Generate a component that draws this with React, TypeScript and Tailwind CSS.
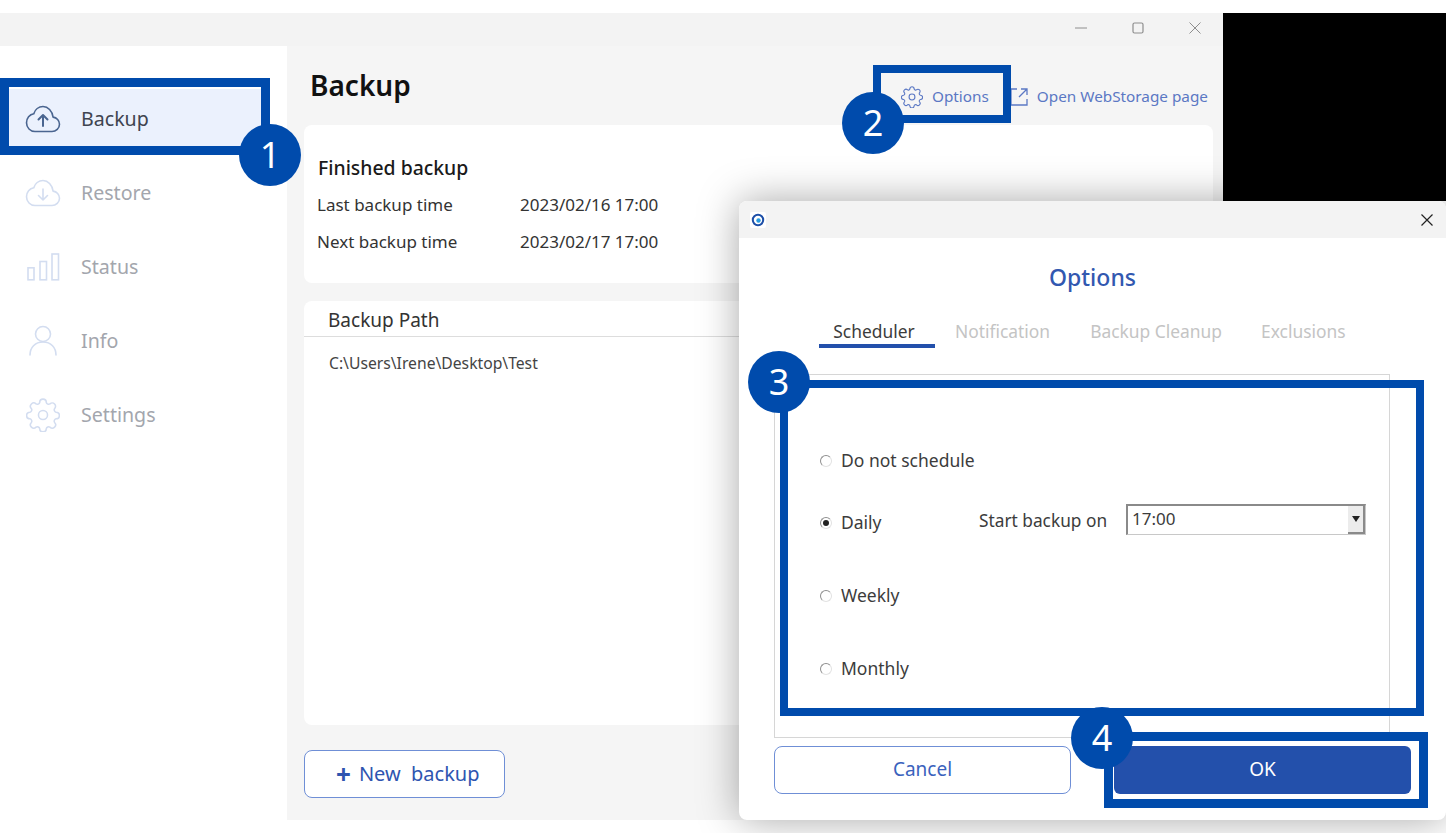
import type { ReactNode } from "react"

const font = { fontFamily: '"Noto Sans", sans-serif' }

function CloudUp({ color, down }: { color: string; down?: boolean }) {
  return (
    <svg width="36" height="28" viewBox="0 0 36 28" fill="none" stroke={color} strokeWidth="1.6" strokeLinecap="round" strokeLinejoin="round">
      <path d="M10 26.5h17c4 0 7.5-3.2 7.5-7.2 0-3.700-2.800-6.700-6.400-7.200C27.200 5.800 23 1.500 18 1.500c-4.300 0-8 3-9.200 7.200C4.600 9.300 1.500 13.200 1.500 17.700c0 4.900 3.800 8.800 8.500 8.800z" />
      {down ? <path d="M18 10v11M13.500 16.500 18 21l4.500-4.500" /> : <path d="M18 21V10M13.500 14.500 18 10l4.500 4.500" strokeWidth="2" />}
    </svg>
  )
}

function Bars({ color }: { color: string }) {
  return (
    <svg width="34" height="28" viewBox="0 0 34 28" fill="none" stroke={color} strokeWidth="1.6">
      <rect x="2" y="14.800" width="6" height="12" />
      <rect x="14" y="8.500" width="6.500" height="18.300" />
      <rect x="26" y="1" width="6.500" height="25.800" />
    </svg>
  )
}

function Person({ color }: { color: string }) {
  return (
    <svg width="30" height="32" viewBox="0 0 30 32" fill="none" stroke={color} strokeWidth="1.6" strokeLinecap="round">
      <circle cx="15" cy="9" r="7.500" />
      <path d="M2 30c0-7.500 5-13 13-13s13 5.500 13 13" />
    </svg>
  )
}

function Gear({ color, size, sw }: { color: string; size: number; sw: number }) {
  return (
    <svg width={size} height={size} viewBox="0 0 24 24" fill="none" stroke={color} strokeWidth={sw} strokeLinecap="round" strokeLinejoin="round">
      <path d="M9.670 4.140a2.300 2.300 0 0 1 4.660 0 1.700 1.700 0 0 0 2.550 1.050 2.300 2.300 0 0 1 3.300 3.300 1.700 1.700 0 0 0 1.050 2.550 2.300 2.300 0 0 1 0 4.660 1.700 1.700 0 0 0-1.050 2.550 2.300 2.300 0 0 1-3.300 3.300 1.700 1.700 0 0 0-2.550 1.050 2.300 2.300 0 0 1-4.660 0 1.700 1.700 0 0 0-2.550-1.050 2.300 2.300 0 0 1-3.300-3.300 1.700 1.700 0 0 0-1.050-2.550 2.300 2.300 0 0 1 0-4.660 1.700 1.700 0 0 0 1.050-2.550 2.300 2.300 0 0 1 3.300-3.300 1.700 1.700 0 0 0 2.550-1.050z" transform="translate(0 -1)" />
      <circle cx="12" cy="12" r="3.200" />
    </svg>
  )
}

function NavItem({ icon, label, active }: { icon: ReactNode; label: string; active?: boolean }) {
  return (
    <div className={`flex h-[59px] w-[252px] items-center ${active ? "bg-[#ebf1fd]" : ""}`}>
      <div className="flex w-[72px] justify-center pr-[4px]">{icon}</div>
      <span className={`text-[19.6px] leading-none ${active ? "text-[#3f4450]" : "text-[#a3a6ad]"}`}>{label}</span>
    </div>
  )
}

function Radio({ label, checked, labelClass }: { label: string; checked?: boolean; labelClass: string }) {
  return (
    <div className={`flex items-center ${labelClass}`}>
      <span className="flex h-[12px] w-[12px] items-center justify-center rounded-full border border-[#8f8f8f] border-b-[#e2e2e2] border-r-[#e2e2e2] bg-white">
        {checked && <span className="h-[6px] w-[6px] rounded-full bg-[#222222]" />}
      </span>
      <span className="ml-[9px] text-[17.5px] leading-none text-[#3c3c3c]">{label}</span>
    </div>
  )
}

function Marker({ n, className }: { n: number; className: string }) {
  return (
    <div className={`absolute flex h-[62px] w-[62px] items-center justify-center rounded-full bg-[#004bac] text-[36px] leading-none text-white ${className}`}>
      {n}
    </div>
  )
}

function Frame({ className }: { className: string }) {
  return <div className={`absolute border-[#004bac] ${className}`} />
}

export default function App() {
  return (
    <div className="relative h-[833px] w-[1446px] overflow-hidden bg-white" style={font}>
      <div className="flex h-[820px] pt-[13px]">
        {/* Main window */}
        <div className="flex h-[807px] w-[1223px] flex-col bg-[#f3f3f3]">
          <div className="flex h-[33px] items-center justify-end gap-[41px] pb-[4px] pr-[20px]">
            <svg width="16" height="16" viewBox="0 0 16 16" stroke="#8e8e8e" strokeWidth="1"><path d="M2 8h12" /></svg>
            <svg width="16" height="16" viewBox="0 0 16 16" fill="none" stroke="#8e8e8e" strokeWidth="1.200"><rect x="3" y="3" width="10" height="10" rx="1.500" /></svg>
            <svg width="16" height="16" viewBox="0 0 16 16" stroke="#8e8e8e" strokeWidth="1"><path d="M2.500 2.500l11 11M13.500 2.500l-11 11" /></svg>
          </div>
          <div className="flex flex-1">
            <aside className="flex w-[287px] flex-col gap-[15px] bg-white pl-[9px] pt-[43px]">
              <NavItem active label="Backup" icon={<CloudUp color="#4a6590" />} />
              <NavItem label="Restore" icon={<CloudUp down color="#d3ddf0" />} />
              <NavItem label="Status" icon={<Bars color="#d3ddf0" />} />
              <NavItem label="Info" icon={<Person color="#d3ddf0" />} />
              <NavItem label="Settings" icon={<Gear color="#d3ddf0" size={34} sw={1.1} />} />
            </aside>
            <main className="flex flex-1 flex-col bg-[#f5f5f5] pl-[17px] pr-[10px]">
              <div className="flex h-[79px] items-start justify-between">
                <h1 className="ml-[6px] mt-[19px] text-[28px] font-semibold leading-[40px] text-[#111111]">Backup</h1>
                <div className="mr-[5px] mt-[40px] flex items-center text-[15.3px] leading-none text-[#5b78c4]">
                  <Gear color="#5b78c4" size={22} sw={1.200} />
                  <span className="ml-[9px] mr-[20px]">Options</span>
                  <svg width="20" height="20" viewBox="0 0 20 20" fill="none" stroke="#5b78c4" strokeWidth="1.300" className="mr-[8px]">
                    <path d="M8 2H2v16h16v-6M12 2h6v6M18 2l-8 8" />
                  </svg>
                  <span>Open WebStorage page</span>
                </div>
              </div>
              <section className="h-[158px] rounded-[8px] bg-white pl-[13px] pt-[30px] text-[#333333]">
                <div className="ml-[1px] text-[19.4px] font-medium leading-[26px] text-[#1a1a1a]">Finished backup</div>
                <div className="mt-[10px] flex h-[26px] items-center text-[17px] leading-none">
                  <span className="w-[203px]">Last backup time</span>
                  <span>2023/02/16 17:00</span>
                </div>
                <div className="mt-[11px] flex h-[26px] items-center text-[17px] leading-none">
                  <span className="w-[203px]">Next backup time</span>
                  <span>2023/02/17 17:00</span>
                </div>
              </section>
              <section className="mt-[18px] h-[424px] rounded-[8px] bg-white">
                <div className="flex h-[36px] items-center border-b border-[#dddddd] pl-[24px] pt-[4px] text-[19px] leading-none text-[#333333]">Backup Path</div>
                <div className="pl-[25px] pt-[16px] text-[15.7px] leading-[20px] text-[#444444]">C:\Users\Irene\Desktop\Test</div>
              </section>
              <button className="mt-[25px] flex h-[48px] w-[201px] items-center rounded-[8px] border border-[#6f8fd6] bg-white pl-[31px] text-[20px] leading-none text-[#2f55b0]">
                <span className="mr-[8px] text-[26px] font-bold leading-none">+</span>New&nbsp; backup
              </button>
            </main>
          </div>
        </div>
        <div className="h-[188px] w-[223px] bg-black" />
      </div>

      {/* Options dialog */}
      <div className="absolute left-[739px] top-[201px] flex h-[619px] w-[707px] flex-col overflow-hidden rounded-[8px] bg-white shadow-[0_0_40px_rgba(0,0,0,0.35)]">
        <div className="flex h-[37px] items-center justify-between bg-[#f3f3f3] pl-[11px] pr-[11px]">
          <svg width="16" height="16" viewBox="0 0 16 16" fill="none">
            <rect width="16" height="16" rx="2" fill="#ffffff" />
            <circle cx="8" cy="8" r="5.200" stroke="#1d4fa8" strokeWidth="2" />
            <circle cx="8.500" cy="8.500" r="2.200" fill="#2a9be0" />
          </svg>
          <svg width="16" height="16" viewBox="0 0 16 16" stroke="#222222" strokeWidth="1.200"><path d="M2.500 2.500l11 11M13.500 2.500l-11 11" /></svg>
        </div>
        <h2 className="mt-[23px] text-center text-[23px] font-medium leading-[32px] text-[#3258b0]">Options</h2>
        <div className="ml-[80px] mt-[25px] flex h-[30px] text-[17.4px] leading-[26px] text-[#c4c4c4]">
          <div className="flex h-[30px] w-[116px] justify-center border-b-4 border-[#2350ab] pr-[6px] text-[#3c3c3c]">Scheduler</div>
          <span className="ml-[20px]">Notification</span>
          <span className="ml-[40px]">Backup Cleanup</span>
          <span className="ml-[39px]">Exclusions</span>
        </div>
        <div className="ml-[35px] mt-[26px] flex h-[364px] w-[616px] flex-col border border-[#d6d6d6] pl-[45px] pt-[76px]">
          <Radio label="Do not schedule" labelClass="h-[20px]" />
          <div className="mt-[36px] flex h-[32px] items-center">
            <Radio checked label="Daily" labelClass="w-[159px]" />
            <span className="mb-[4px] text-[17.3px] leading-none text-[#3c3c3c]">Start backup on</span>
            <div className="mb-[7px] ml-[19px] flex h-[31px] w-[240px] items-stretch border border-l-2 border-t-2 border-[#c8c8c8] border-l-[#8a8a8a] border-t-[#8a8a8a] bg-white">
              <span className="flex-1 pl-[4px] text-[17px] leading-[25px] text-[#3c3c3c]">17:00</span>
              <span className="flex w-[17px] items-center justify-center border-b-2 border-r-2 border-[#8a8a8a] bg-[#ececec]">
                <svg width="8" height="6" viewBox="0 0 8 6"><path d="M0 0h8L4 6z" fill="#222222" /></svg>
              </span>
            </div>
          </div>
          <Radio label="Weekly" labelClass="mt-[47px] h-[20px]" />
          <Radio label="Monthly" labelClass="mt-[53px] h-[20px]" />
        </div>
        <div className="ml-[35px] mt-[8px] flex gap-[43px]">
          <button className="h-[48px] w-[297px] rounded-[8px] border border-[#6f8fd6] bg-white pb-[2px] text-[19px] leading-none text-[#3a62bd]">Cancel</button>
          <button className="h-[48px] w-[297px] rounded-[6px] bg-[#2350ab] pb-[2px] text-[19px] leading-none text-white">OK</button>
        </div>
      </div>

      {/* Callouts */}
      <Frame className="left-0 top-[78px] h-[77px] w-[270px] border-[9px]" />
      <Frame className="left-[873px] top-[65px] h-[58px] w-[138px] border-[8px]" />
      <Frame className="left-[780px] top-[380px] h-[336px] w-[644px] border-[8px]" />
      <Frame className="left-[1104px] top-[732px] h-[76px] w-[324px] border-[9px]" />
      <Marker n={1} className="left-[239px] top-[124px]" />
      <Marker n={2} className="left-[842px] top-[92px]" />
      <Marker n={3} className="left-[748px] top-[351px]" />
      <Marker n={4} className="left-[1071px] top-[707px]" />
    </div>
  )
}
